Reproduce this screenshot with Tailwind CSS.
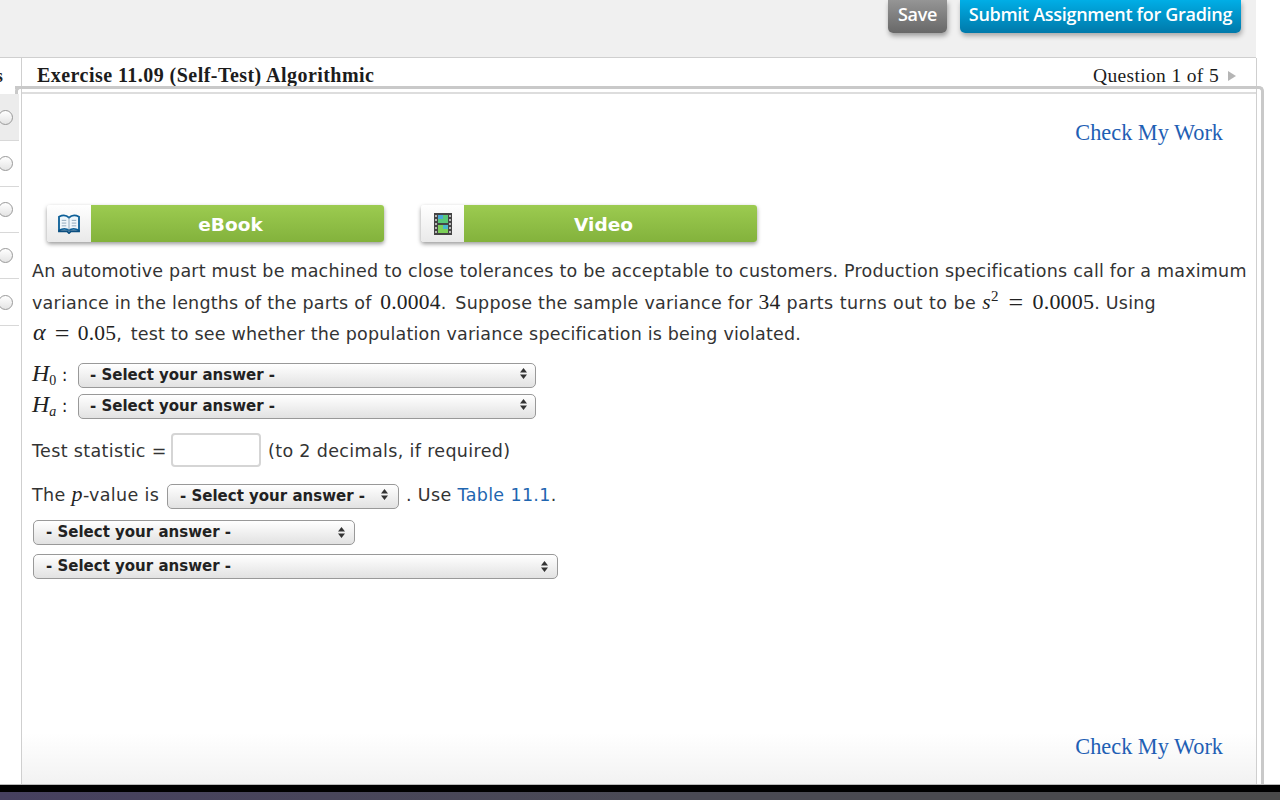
<!DOCTYPE html>
<html lang="en">
<head>
    <meta charset="UTF-8">
    <title>Exercise 11.09</title>
    <script src="https://cdn.jsdelivr.net/npm/@tailwindcss/browser@4"></script>
</head>
<body class="bg-white overflow-hidden">
<div class="relative w-[1280px] h-[800px] overflow-hidden flex flex-col bg-white">

    <!-- top bar -->
    <div class="w-[1256px] h-[58px] shrink-0 bg-[#f0f0f0] border-b border-[#cfcfcf] flex justify-end items-start gap-[13px] pr-[15px] font-['Open_Sans',sans-serif] font-semibold text-white text-[18px] tracking-[-0.3px]">
        <button class="w-[59px] h-[33px] pb-[4px] rounded-b-[5px] bg-gradient-to-b from-[#959595] to-[#686868] shadow-[1px_3px_5px_rgba(0,0,0,0.35)] leading-[29px]">Save</button>
        <button class="w-[281px] h-[33px] pb-[4px] rounded-b-[5px] bg-gradient-to-b from-[#00aee6] to-[#0079aa] shadow-[1px_3px_5px_rgba(0,0,0,0.3)] leading-[29px]">Submit Assignment for Grading</button>
    </div>

    <div class="flex flex-1 min-h-0">
        <!-- question list -->
        <div class="w-[22px] shrink-0 border-r border-[#cfcfcf]">
            <div class="h-[36px] overflow-hidden flex justify-end pr-[18px] pt-[6px] font-['Liberation_Serif',serif] font-bold text-[19px] leading-[24px] text-[#222]">s</div>
            <div class="w-[19px] h-[47px] bg-[#ececec] border-b border-[#d8d8d8] flex items-center"><span class="block w-[15px] h-[15px] -ml-[2px] rounded-full border border-[#999] bg-gradient-to-b from-[#fff] to-[#e4e4e4]"></span></div>
            <div class="w-[19px] h-[46px] border-b border-[#d8d8d8] flex items-center"><span class="block w-[15px] h-[15px] -ml-[2px] rounded-full border border-[#999] bg-gradient-to-b from-[#fff] to-[#e4e4e4]"></span></div>
            <div class="w-[19px] h-[46px] border-b border-[#d8d8d8] flex items-center"><span class="block w-[15px] h-[15px] -ml-[2px] rounded-full border border-[#999] bg-gradient-to-b from-[#fff] to-[#e4e4e4]"></span></div>
            <div class="w-[19px] h-[46px] border-b border-[#d8d8d8] flex items-center"><span class="block w-[15px] h-[15px] -ml-[2px] rounded-full border border-[#999] bg-gradient-to-b from-[#fff] to-[#e4e4e4]"></span></div>
            <div class="w-[19px] h-[47px] border-b border-[#d8d8d8] flex items-center"><span class="block w-[15px] h-[15px] -ml-[2px] rounded-full border border-[#999] bg-gradient-to-b from-[#fff] to-[#e4e4e4]"></span></div>
        </div>

        <!-- exercise -->
        <div class="w-[1235px] shrink-0 border-r border-[#cfcfcf] flex flex-col bg-gradient-to-b from-white from-[93%] to-[#f2f2f2]">
            <div class="h-[36px] shrink-0 bg-white border-b-2 border-[#dddddd] flex justify-between pl-[15px] pr-[20px] pt-[5px] font-['Liberation_Serif',serif] text-[#1c1c1c] leading-[24px]">
                <span class="font-bold text-[20px] tracking-[0.46px]">Exercise 11.09 (Self-Test) Algorithmic</span>
                <span class="flex items-center h-[24px] gap-[9px] text-[19.5px] tracking-[0.35px] pt-[1px]">Question 1 of 5
                    <svg width="8" height="10" viewBox="0 0 8 10"><path d="M0 0 L8 5 L0 10 Z" fill="#b5b5b5"/></svg>
                </span>
            </div>

            <div class="flex-1 flex flex-col pl-[10px] pb-[24px] font-['DejaVu_Sans',sans-serif] text-[17.5px] text-[#333]">
                <div class="text-right pr-[33px] pt-[26px] font-['Liberation_Serif',serif] text-[22.3px] leading-[26px] text-[#1f5fb4]">Check My Work</div>

                <div class="flex mt-[59px] ml-[15px] gap-[37px] font-bold text-white text-[18.5px]">
                    <div class="flex w-[337px] h-[37px] rounded-[3px] shadow-[0_2px_4px_rgba(0,0,0,0.4)]">
                        <div class="w-[44px] flex items-center justify-center bg-gradient-to-b from-white to-[#e9e9e9] rounded-l-[3px]">
                            <svg width="24" height="20" viewBox="0 0 26 22"><path d="M2 3 C6 1 10 1 13 4 C16 1 20 1 24 3 V18 C20 16 16 16 13 18 C10 16 6 16 2 18 Z" fill="#eef6fb" stroke="#0c5f97" stroke-width="2"/><path d="M13 4 V18 M5 7 H10 M5 10 H10 M5 13 H10 M16 7 H21 M16 10 H21 M16 13 H21" stroke="#8aa5b8" stroke-width="1"/><path d="M1 19 H11 L13 21 L15 19 H25" fill="none" stroke="#0c4f80" stroke-width="2"/></svg>
                        </div>
                        <div class="flex-1 flex items-center justify-center pr-[14px] pt-[3px] bg-gradient-to-b from-[#9ccb50] to-[#83b23c] rounded-r-[3px]">eBook</div>
                    </div>
                    <div class="flex w-[336px] h-[37px] rounded-[3px] shadow-[0_2px_4px_rgba(0,0,0,0.4)]">
                        <div class="w-[43px] flex items-center justify-center bg-gradient-to-b from-white to-[#e9e9e9] rounded-l-[3px]">
                            <svg width="18" height="22" viewBox="0 0 18 22"><rect x="0" y="0" width="18" height="22" fill="#444"/><rect x="4" y="2" width="10" height="8" fill="#58c878"/><rect x="4" y="2" width="5" height="4" fill="#4aa8d8"/><rect x="4" y="12" width="10" height="8" fill="#7ccf58"/><rect x="9" y="12" width="5" height="4" fill="#48b8c8"/><path d="M2 2 V20 M16 2 V20" stroke="#ddd" stroke-width="1.5" stroke-dasharray="2 2"/></svg>
                        </div>
                        <div class="flex-1 flex items-center justify-center pr-[14px] pt-[3px] bg-gradient-to-b from-[#9ccb50] to-[#83b23c] rounded-r-[3px]">Video</div>
                    </div>
                </div>

                <p class="mt-[14px] h-[94px] leading-[31.5px] whitespace-nowrap tracking-[0.21px]">
                    An automotive part must be machined to close tolerances to be acceptable to customers. Production specifications call for a maximum<br>
                    variance in the lengths of the parts of <span class="ml-[3px] font-['Liberation_Serif',serif] text-[21.5px] leading-none text-[#222]">0.0004</span>.<span class="ml-[3px] tracking-[0.27px]"> Suppose the sample variance for </span><span class="font-['Liberation_Serif',serif] text-[21.5px] leading-none text-[#222]">34</span><span class="tracking-[0.45px]"> parts turns out to be </span><span class="font-['Liberation_Serif',serif] text-[21.5px] leading-none text-[#222]"><i>s</i><sup class="text-[15px] leading-none">2</sup><span class="text-[26px] leading-none ml-[10px] mr-[9px] align-[-2px]">=</span><span class="text-[22px]">0.0005</span></span>. Using<br>
                    <span class="font-['Liberation_Serif',serif] text-[21.5px] leading-none text-[#222]"><i class="text-[24px] leading-none ml-px">α</i><span class="text-[26px] leading-none ml-[9px] mr-[8px] align-[-2px]">=</span>0.05</span>,<span class="ml-[3px] tracking-[0.19px]"> test to see whether the population variance specification is being violated.</span>
                </p>

                <div class="flex items-center h-[25px] mt-[12px]">
                    <span class="w-[46px] -mt-[3px] font-['Liberation_Serif',serif] text-[24px] text-[#222]"><i>H</i><sub class="text-[14px]">0</sub><span class="font-['DejaVu_Sans',sans-serif] text-[17px]"> :</span></span>
                    <div class="relative w-[458px]">
                        <select class="appearance-none w-full h-[25px] pl-[11px] rounded-[5px] border border-[#999] bg-gradient-to-b from-white to-[#e2e2e2] font-bold text-[15px] text-[#222]"><option>- Select your answer -</option></select>
                        <svg class="absolute right-[9px] top-[7px]" width="7" height="11" viewBox="0 0 7 11"><path d="M3.5 0 L7 4.5 H0 Z M3.5 11 L7 6.5 H0 Z" fill="#333"/></svg>
                    </div>
                </div>
                <div class="flex items-center h-[25px] mt-[6px]">
                    <span class="w-[46px] -mt-[3px] font-['Liberation_Serif',serif] text-[24px] text-[#222]"><i>H</i><sub class="text-[14px]"><i>a</i></sub><span class="font-['DejaVu_Sans',sans-serif] text-[17px]"> :</span></span>
                    <div class="relative w-[458px]">
                        <select class="appearance-none w-full h-[25px] pl-[11px] rounded-[5px] border border-[#999] bg-gradient-to-b from-white to-[#e2e2e2] font-bold text-[15px] text-[#222]"><option>- Select your answer -</option></select>
                        <svg class="absolute right-[9px] top-[7px]" width="7" height="11" viewBox="0 0 7 11"><path d="M3.5 0 L7 4.5 H0 Z M3.5 11 L7 6.5 H0 Z" fill="#333"/></svg>
                    </div>
                </div>

                <div class="flex items-center h-[34px] mt-[15px] tracking-[0.35px]">
                    <span class="w-[139px] pt-[2px]">Test statistic =</span>
                    <input type="text" class="w-[90px] h-[34px] rounded-[4px] border-2 border-[#d5d5d5] bg-white">
                    <span class="ml-[7px] pt-[2px]">(to 2 decimals, if required)</span>
                </div>

                <div class="flex items-center h-[25px] mt-[16px] tracking-[0.35px]">
                    <span class="w-[135px]">The <i class="font-['Liberation_Serif',serif] text-[22px] leading-none text-[#222]">p</i>-value is</span>
                    <div class="relative w-[232px]">
                        <select class="appearance-none w-full h-[25px] pl-[12px] rounded-[5px] border border-[#999] bg-gradient-to-b from-white to-[#e2e2e2] font-bold text-[15px] tracking-normal text-[#222]"><option>- Select your answer -</option></select>
                        <svg class="absolute right-[11px] top-[7px]" width="7" height="11" viewBox="0 0 7 11"><path d="M3.5 0 L7 4.5 H0 Z M3.5 11 L7 6.5 H0 Z" fill="#333"/></svg>
                    </div>
                    <span class="ml-[7px]">. Use <span class="text-[#1f66b0]">Table 11.1</span>.</span>
                </div>

                <div class="relative w-[322px] mt-[12px] ml-px">
                    <select class="appearance-none w-full h-[25px] pl-[12px] rounded-[5px] border border-[#999] bg-gradient-to-b from-white to-[#e2e2e2] font-bold text-[15px] text-[#222] block"><option>- Select your answer -</option></select>
                    <svg class="absolute right-[10px] top-[7px]" width="7" height="11" viewBox="0 0 7 11"><path d="M3.5 0 L7 4.5 H0 Z M3.5 11 L7 6.5 H0 Z" fill="#333"/></svg>
                </div>
                <div class="relative w-[525px] mt-[9px] ml-px">
                    <select class="appearance-none w-full h-[25px] pl-[12px] rounded-[5px] border border-[#999] bg-gradient-to-b from-white to-[#e2e2e2] font-bold text-[15px] text-[#222] block"><option>- Select your answer -</option></select>
                    <svg class="absolute right-[10px] top-[7px]" width="7" height="11" viewBox="0 0 7 11"><path d="M3.5 0 L7 4.5 H0 Z M3.5 11 L7 6.5 H0 Z" fill="#333"/></svg>
                </div>

                <div class="mt-auto text-right pr-[33px] font-['Liberation_Serif',serif] text-[22.3px] leading-[26px] text-[#1f5fb4]">Check My Work</div>
            </div>
        </div>
    </div>

    <!-- bottom strip -->
    <div class="h-[16px] shrink-0 border-t border-[#bbbbbb] bg-black flex items-end">
        <div class="w-full h-[8px] bg-gradient-to-r from-[#46405f] via-[#4a4a55] to-[#4a4a4a]"></div>
    </div>

    <!-- outer frame lying over the page -->
    <div class="absolute left-[15px] top-[86px] w-[1249px] h-[698px] border-t-[3px] border-r-[3px] border-[#c9c9c9] rounded-tr-[5px] pointer-events-none"></div>
    <div class="absolute left-[15px] top-[86px] w-[8px] h-[8px] border-l-[3px] border-t-[3px] border-[#c9c9c9] rounded-tl-[5px] pointer-events-none"></div>
</div>
</body>
</html>
